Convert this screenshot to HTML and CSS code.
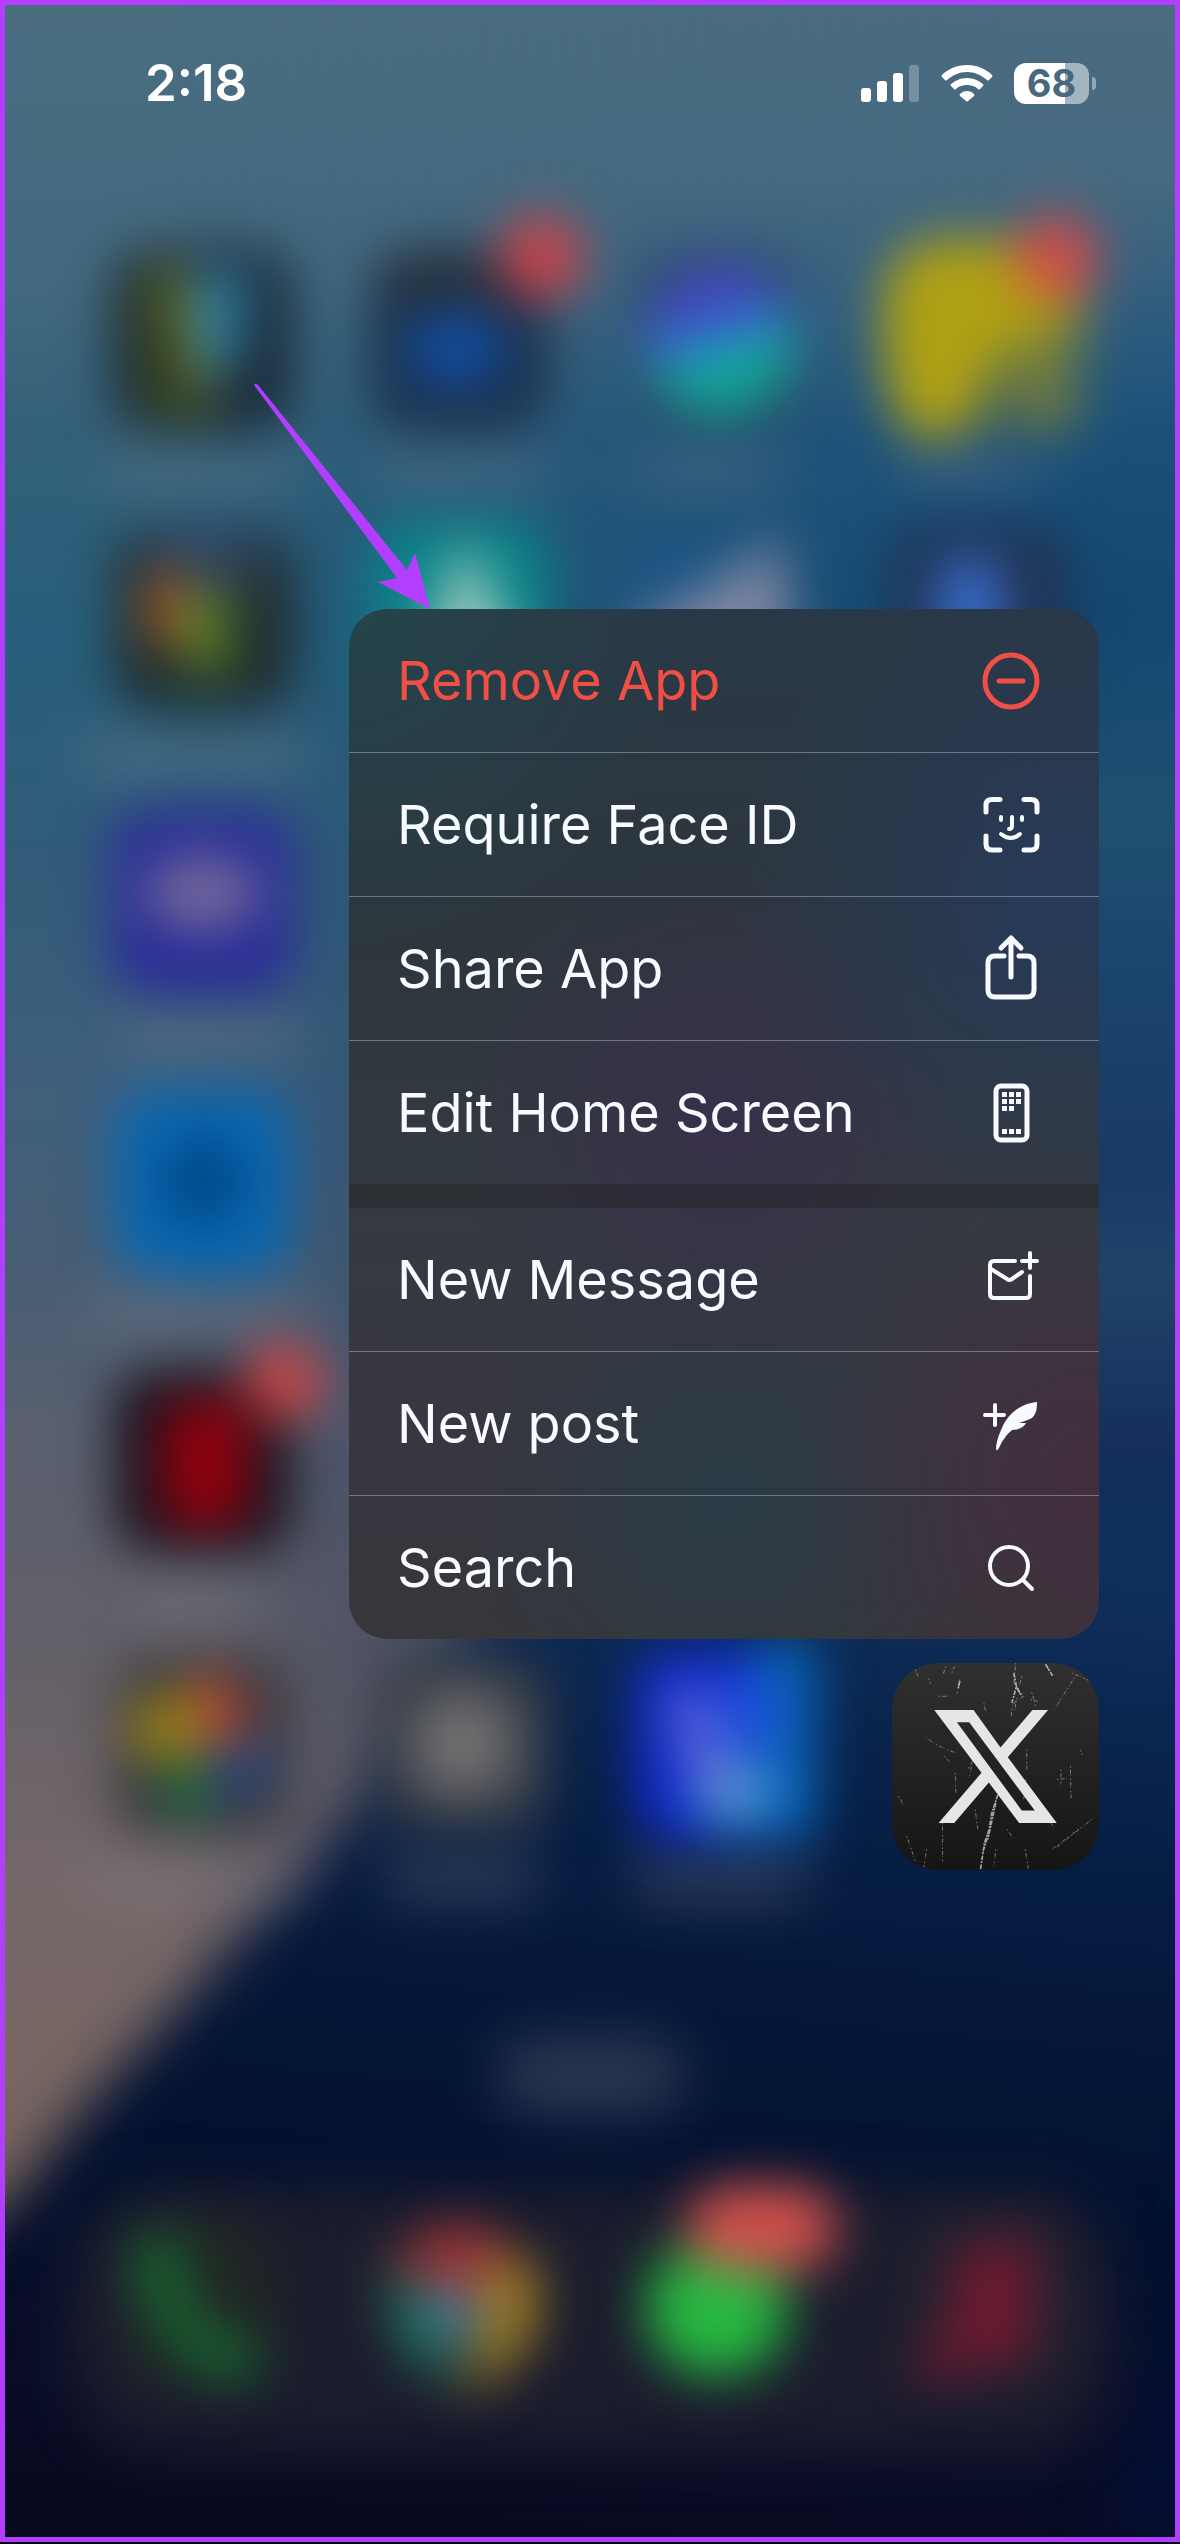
FILE: index.html
```html
<!DOCTYPE html>
<html lang="en">
<head>
    <meta charset="UTF-8">
    <meta name="viewport" content="width=device-width, initial-scale=1.0">
    <title>Home Screen</title>
    <link rel="stylesheet" href="styles.css">
</head>
<body>
    <div class="screen">
        <!-- blurred home screen -->
        <svg class="wallpaper" viewBox="5 5 1169 2531" preserveAspectRatio="xMidYMin slice" aria-hidden="true">
            <defs>
                <linearGradient id="left" gradientUnits="userSpaceOnUse" x1="0" y1="0" x2="0" y2="2544">
                    <stop offset="0" stop-color="#4a6d80"/>
                    <stop offset=".11" stop-color="#43697f"/>
                    <stop offset=".17" stop-color="#336079"/>
                    <stop offset=".25" stop-color="#285f7c"/>
                    <stop offset=".34" stop-color="#325c79"/>
                    <stop offset=".43" stop-color="#3f5f7b"/>
                    <stop offset=".5" stop-color="#485d73"/>
                    <stop offset=".56" stop-color="#596070"/>
                    <stop offset=".64" stop-color="#636069"/>
                    <stop offset=".74" stop-color="#746769"/>
                    <stop offset=".85" stop-color="#79655f"/>
                </linearGradient>
                <linearGradient id="right" gradientUnits="userSpaceOnUse" x1="0" y1="0" x2="0" y2="2544">
                    <stop offset="0" stop-color="#4a6b80"/>
                    <stop offset=".07" stop-color="#466a80"/>
                    <stop offset=".11" stop-color="#35607f"/>
                    <stop offset=".17" stop-color="#1b507b"/>
                    <stop offset=".24" stop-color="#134873"/>
                    <stop offset=".32" stop-color="#205070"/>
                    <stop offset=".38" stop-color="#1b456d"/>
                    <stop offset=".46" stop-color="#183a66"/>
                    <stop offset=".5" stop-color="#204369"/>
                    <stop offset=".57" stop-color="#162e5b"/>
                    <stop offset=".68" stop-color="#0b2855"/>
                    <stop offset=".8" stop-color="#071a40"/>
                </linearGradient>
                <linearGradient id="night" gradientUnits="userSpaceOnUse" x1="300" y1="1500" x2="200" y2="2544">
                    <stop offset="0" stop-color="#0f2f5c"/>
                    <stop offset=".2" stop-color="#08224a"/>
                    <stop offset=".4" stop-color="#05183b"/>
                    <stop offset=".65" stop-color="#03102e"/>
                    <stop offset=".85" stop-color="#0a0d28"/>
                    <stop offset="1" stop-color="#07091d"/>
                </linearGradient>
                <linearGradient id="fade">
                    <stop offset=".2" stop-color="#000"/>
                    <stop offset=".8" stop-color="#fff"/>
                </linearGradient>
                <linearGradient id="siri" x1=".35" y1="0" x2=".65" y2="1">
                    <stop offset=".1" stop-color="#443fb4"/>
                    <stop offset=".42" stop-color="#3d5cd2"/>
                    <stop offset=".62" stop-color="#14aaa6"/>
                    <stop offset="1" stop-color="#0ca688"/>
                </linearGradient>
                <mask id="fadeMask"><rect x="-100" y="0" width="1380" height="2544" fill="url(#fade)"/></mask>
                <filter id="soft" filterUnits="userSpaceOnUse" x="-100" y="-100" width="1380" height="2744" color-interpolation-filters="sRGB"><feGaussianBlur stdDeviation="25"/></filter>
                <filter id="softer" filterUnits="userSpaceOnUse" x="-200" y="-100" width="1580" height="2944" color-interpolation-filters="sRGB"><feGaussianBlur stdDeviation="28"/></filter>
            </defs>

            <rect width="1180" height="2544" fill="url(#left)"/>
            <rect width="1180" height="2544" fill="url(#right)" mask="url(#fadeMask)"/>
            <path d="M560 1480L455 1660L370 1795L280 1895L85 2105L5 2205L-160 2300V2760H1380V1480Z" fill="url(#night)" filter="url(#softer)"/>
            <path d="M1260 2020L1100 2544H1260Z" fill="#03103a" opacity=".7" filter="url(#softer)"/>

            <!-- label smudges and dock -->
            <g fill="#8a8c96" opacity=".3" filter="url(#softer)">
                <rect x="100" y="450" width="200" height="40" rx="20"/>
                <rect x="370" y="450" width="180" height="40" rx="20"/>
                <rect x="635" y="450" width="150" height="40" rx="20"/>
                <rect x="900" y="450" width="140" height="40" rx="20"/>
                <rect x="80" y="730" width="230" height="46" rx="20"/>
                <rect x="120" y="1010" width="180" height="46" rx="20"/>
                <rect x="90" y="1285" width="220" height="46" rx="20"/>
                <rect x="140" y="1575" width="120" height="46" rx="20"/>
                <rect x="80" y="1855" width="230" height="40" rx="20"/>
                <rect x="380" y="1850" width="160" height="50" rx="20"/>
                <rect x="630" y="1850" width="180" height="50" rx="20"/>
                <rect x="495" y="2036" width="190" height="76" rx="36"/>
            </g>
            <rect x="72" y="2185" width="1040" height="262" rx="90" fill="#1f1f2f" opacity=".9" filter="url(#softer)"/>

            <g filter="url(#soft)">
                <!-- row 1 -->
                <rect x="112" y="248" width="180" height="182" rx="40" fill="#1a2937"/>
                <path d="M128 280L168 260L215 425H140Z" fill="#2f3a20"/>
                <path d="M150 265H188L218 400H185Z" fill="#757f28" opacity=".7"/>
                <path d="M190 275L250 270L236 370L205 380Z" fill="#3080a8"/>
                <rect x="372" y="250" width="174" height="178" rx="40" fill="#1a2d46"/>
                <rect x="376" y="250" width="120" height="60" rx="30" fill="#26303c"/>
                <rect x="408" y="312" width="96" height="74" rx="26" fill="#124c9e"/>
                <circle cx="541" cy="257" r="43" fill="#c8444a"/>
                <rect x="635" y="252" width="164" height="174" rx="40" fill="#2b4a62" opacity=".85"/>
                <circle cx="719" cy="338" r="75" fill="url(#siri)"/>
                <path d="M882 300Q887 237 950 238H1040Q1085 260 1080 320L1075 430H1030L1000 360L960 438H910Q877 400 882 300Z" fill="#b0a114"/>
                <path d="M1000 350L1020 345L1040 430L975 440Z" fill="#4a6557"/>
                <path d="M1035 330H1075V425H1045Z" fill="#5f7148"/>
                <circle cx="1056" cy="257" r="42" fill="#d44b47"/>
                <!-- row 2 -->
                <rect x="114" y="531" width="180" height="178" rx="40" fill="#202c2e"/>
                <rect x="150" y="530" width="110" height="60" rx="26" fill="#30415e"/>
                <path d="M142 580L182 560L188 645H148Z" fill="#985729"/>
                <path d="M182 600L230 583L227 670L190 676Z" fill="#5e8626"/>
                <rect x="370" y="520" width="178" height="190" rx="40" fill="#0a8488"/>
                <path d="M465 535L415 670H525Z" fill="#9ccabf"/>
                <rect x="630" y="540" width="160" height="120" rx="46" fill="#1c5585"/>
                <path d="M780 535L720 580L630 630V680H795Z" fill="#8087a1"/>
                <rect x="890" y="526" width="178" height="190" rx="40" fill="#203352"/>
                <rect x="936" y="555" width="66" height="130" rx="30" fill="#386ac8"/>
                <!-- rows 3 to 6 -->
                <rect x="110" y="810" width="184" height="184" rx="40" fill="#2a2d98"/>
                <ellipse cx="202" cy="892" rx="58" ry="38" fill="#72679a"/>
                <rect x="114" y="1089" width="178" height="186" rx="40" fill="#0968b2"/>
                <rect x="160" y="1135" width="86" height="90" rx="36" fill="#004a8a"/>
                <rect x="114" y="1368" width="178" height="184" rx="40" fill="#19121d"/>
                <rect x="162" y="1398" width="86" height="128" rx="26" fill="#90020e"/>
                <circle cx="284" cy="1380" r="40" fill="#c84646"/>
                <rect x="114" y="1655" width="176" height="178" rx="40" fill="#38383f"/>
                <path d="M200 1665Q254 1680 244 1740L200 1745Z" fill="#b84535"/>
                <path d="M132 1700L200 1685V1758H132Z" fill="#997f16"/>
                <path d="M155 1760H205V1820H175Z" fill="#1c6e3a"/>
                <path d="M210 1745H276L260 1795H215Z" fill="#274884"/>
                <rect x="380" y="1655" width="168" height="174" rx="40" fill="#3a3f47"/>
                <circle cx="462" cy="1742" r="52" fill="#706e70"/>
                <rect x="634" y="1646" width="174" height="194" rx="40" fill="#102ccc"/>
                <path d="M760 1640H815V1835H700L725 1790Z" fill="#0866bc"/>
                <path d="M665 1690L700 1690L750 1800L700 1800Z" fill="#6c6cd8"/>
                <rect x="710" y="1680" width="65" height="72" rx="20" fill="#204bdc"/>
                <rect x="694" y="1768" width="74" height="48" rx="18" fill="#6094d0"/>
                <!-- dock -->
                <rect x="124" y="2214" width="150" height="170" rx="46" fill="#202624"/>
                <path d="M132 2245Q155 2215 185 2245L192 2305L222 2330Q264 2335 262 2365Q230 2400 190 2362Q130 2310 132 2245Z" fill="#186230"/>
                <path d="M388 2262Q460 2180 527 2266L465 2310L440 2290Z" fill="#9c3536"/>
                <path d="M388 2260L440 2310L455 2388Q373 2350 388 2260Z" fill="#1e6c54"/>
                <path d="M490 2255H530Q565 2350 460 2392L480 2330Z" fill="#a08026"/>
                <circle cx="450" cy="2312" r="28" fill="#437ea0"/>
                <rect x="644" y="2222" width="150" height="160" rx="46" fill="#1b2d2e"/>
                <ellipse cx="716" cy="2306" rx="70" ry="67" fill="#27b841"/>
                <rect x="686" y="2184" width="150" height="84" rx="42" fill="#d0504c"/>
                <rect x="914" y="2220" width="150" height="160" rx="46" fill="#23232e"/>
                <path d="M955 2248L1034 2230V2345Q1000 2380 970 2360Q935 2396 912 2365Q920 2332 948 2330Z" fill="#6c1a30"/>
            </g>
        </svg>

        <header class="status-bar">
            <span class="time">2:18</span>
            <div class="indicators">
                <svg class="signal" viewBox="0 0 60 40" aria-hidden="true">
                    <rect x="1" y="25" width="10" height="14" rx="3"/>
                    <rect x="17" y="18" width="10" height="21" rx="3"/>
                    <rect x="33" y="10" width="10" height="29" rx="3"/>
                    <rect x="49" y="2" width="10" height="37" rx="3" opacity=".25"/>
                </svg>
                <svg class="wifi" viewBox="0 0 52 40" aria-hidden="true">
                    <path d="M26 2C36 2 45 6 51 12Q52 13 51 14L48 17Q47 18 46 17C40 12 34 9 26 9S12 12 6 17Q5 18 4 17L1 14Q0 13 1 12C7 6 16 2 26 2Z"/>
                    <path d="M26 15C33 15 38 18 42 21Q43 22 42 23L39 26Q38 27 37 26C34 23 30 22 26 22S18 23 15 26Q14 27 13 26L10 23Q9 22 10 21C14 18 19 15 26 15Z"/>
                    <path d="M26 28C29 28 31 29 33 31Q34 32 33 33L27 38Q26 39 25 38L19 33Q18 32 19 31C21 29 23 28 26 28Z"/>
                </svg>
                <div class="battery"><span class="battery-level">68</span></div>
            </div>
        </header>

        <main class="context">
            <div class="menu-wrap">
                <svg class="arrow" viewBox="0 0 180 229" aria-hidden="true">
                    <path d="M4 5Q5 3 8 5L157 190L165 173L180 229L128 202L147 198Z"/>
                </svg>
                <div class="menu">
                    <div class="menu-group">
                        <button class="menu-item remove" type="button">Remove App
                            <svg class="icon" viewBox="0 0 60 72"><circle cx="30" cy="36" r="26"/><path d="M18 36H42"/></svg>
                        </button>
                        <button class="menu-item" type="button">Require Face ID
                            <svg class="icon" viewBox="0 0 60 72"><path d="M5 23V16Q5 10.500 11 10.500H19M43 10.500H50Q56 10.500 56 16V23M5 47V55Q5 61 11 61H19M43 61H50Q56 61 56 55V47"/><path class="face" d="M20 28V31M41 28V31M31 28V37Q31 40 28 40M20 45Q30 53 39 45"/></svg>
                        </button>
                        <button class="menu-item" type="button">Share App
                            <svg class="icon" viewBox="0 0 60 72"><path d="M23 23H14Q7 23 7 30V57Q7 64 14 64H46Q53 64 53 57V30Q53 23 46 23H38M30 44V5M20 15L30 5L40 15"/></svg>
                        </button>
                        <button class="menu-item" type="button">Edit Home Screen
                            <svg class="icon" viewBox="0 0 60 72"><rect x="15" y="9" width="31" height="54" rx="5"/><path class="solid" d="M21 15h5v5h-5zM28 15h5v5h-5zM35 15h5v5h-5zM21 22h5v5h-5zM28 22h5v5h-5zM35 22h5v5h-5zM21 29h5v5h-5zM28 29h5v5h-5zM21 52h5v5h-5zM28 52h5v5h-5zM35 52h5v5h-5z"/></svg>
                        </button>
                    </div>
                    <div class="menu-group">
                        <button class="menu-item" type="button">New Message
                            <svg class="icon thin" viewBox="0 0 60 72"><path d="M34 17H13Q9 17 9 21V50Q9 54 13 54H45Q49 54 49 50V32M10 25L26 35Q28 37 31 35L41 28M41 17H56M49 9V24"/></svg>
                        </button>
                        <button class="menu-item" type="button">New post
                            <svg class="icon thin" viewBox="0 0 60 72"><path d="M4 27H23M14 17V37"/><path class="solid" d="M56 14C37 16 26 28 21 40C17 48 15 56 15 61Q16 64 18 60C21 53 26 46 31 42C38 42 43 39 45 35L38 35C43 33 48 32 51 30C55 26 56 22 56 14Z"/></svg>
                        </button>
                        <button class="menu-item" type="button">Search
                            <svg class="icon thin" viewBox="0 0 60 72"><circle cx="28" cy="34" r="19"/><path d="M42 48L51 57"/></svg>
                        </button>
                    </div>
                </div>
            </div>

            <a class="app" href="#" aria-label="X">
                <svg viewBox="0 0 622 622" aria-hidden="true">
                    <defs>
                        <linearGradient id="tile" x1="0" y1="0" x2="0" y2="1">
                            <stop offset="0" stop-color="#303030"/>
                            <stop offset="1" stop-color="#151515"/>
                        </linearGradient>
                    </defs>
                    <rect width="622" height="622" fill="url(#tile)"/>
                    <g class="scratches">
                        <path d="M372 0L366 60L384 90L362 130L358 160M366 60L396 100L372 116L370 140M390 40L380 80M420 88L432 130M416 110L440 116M460 4L484 40M548 44L488 140M540 30L590 52"/>
                        <path d="M204 50L196 92M162 10L154 32M110 46L116 62M70 20L78 40M140 100H172M276 120L282 150M102 222Q130 250 198 272M158 280L172 296M240 300L234 340M250 280L228 320"/>
                        <path d="M405 260V320M402 350L396 410M536 310L538 410M508 320V370M496 350L530 346M566 262L572 276M600 470L492 556M560 500L480 560M470 470L490 500M346 500L362 524"/>
                        <path d="M190 330L192 390M20 400L36 430M44 520L72 600M152 480V600M104 560L96 614M250 440L258 500M400 560L410 620M312 560L306 610M180 30L188 10"/>
                    </g>
                    <path class="scratch-main" d="M366 30L374 70L360 120M376 76L390 100M204 54L198 80M462 4L482 38M318 396L300 450L292 500L278 540L266 620M294 500L272 572M312 420L288 530"/>
                    <path class="x-mark" fill-rule="evenodd" d="M127 141H245L326 254L422 141H469L348 283L495 481H382L291 359L187 481H140L269 330ZM195 178L390 443H429L232 178Z"/>
                </svg>
            </a>
        </main>
    </div>
</body>
</html>
```
FILE: styles.css
```css
* {
    box-sizing: border-box;
}
body {
    margin: 0;
    background-color: #0a0014;
    font-family: Inter, "Liberation Sans", sans-serif;
    color: #fff;
}
.screen {
    position: relative;
    min-height: calc(100vh - 2px);
    margin-bottom: 2px;
    border: 5px solid #b23fff;
    overflow: hidden;
}
.wallpaper {
    position: absolute;
    inset: 0;
    width: 100%;
    height: 100%;
}

/* status bar */
.status-bar {
    position: relative;
    display: flex;
    justify-content: space-between;
    align-items: center;
    padding: 48px 86px 0 140px;
}
.time {
    font-size: 51px;
    line-height: 60px;
    font-weight: 600;
}
.indicators {
    display: flex;
    align-items: center;
    gap: 21px;
}
.indicators svg {
    height: 40px;
    fill: #fff;
}
.signal {
    width: 60px;
}
.wifi {
    width: 52px;
}
.battery {
    position: relative;
    width: 75px;
    height: 41px;
    border-radius: 12px;
    background: linear-gradient(to right, #fff 68%, #a4b5c0 68%);
    text-align: center;
}
.battery::after {
    content: "";
    position: absolute;
    left: 78px;
    top: 14px;
    width: 4px;
    height: 13px;
    border-radius: 0 4px 4px 0;
    background-color: #93a6b3;
}
.battery-level {
    font-size: 38px;
    line-height: 41px;
    font-weight: 700;
    color: #48697d;
}

/* context menu */
.context {
    position: relative;
    display: flex;
    flex-direction: column;
    align-items: flex-end;
    gap: 24px;
    padding: 496px 76px 100px;
}
.menu-wrap {
    position: relative;
    width: 750px;
    max-width: 100%;
}
.arrow {
    position: absolute;
    left: -99px;
    bottom: 100%;
    width: 180px;
    fill: #b23fff;
}
.menu {
    display: flex;
    flex-direction: column;
    gap: 24px;
    border-radius: 38px;
    overflow: hidden;
    background:
        radial-gradient(circle at 0 0, #25444a, transparent 340px),
        radial-gradient(circle at 95% 28%, #273a5a, transparent 330px),
        radial-gradient(circle at 50% 50%, #38304a, transparent 270px),
        radial-gradient(circle at 100% 85%, #432e3d, transparent 290px),
        radial-gradient(circle at 50% 86%, #2a3b45, transparent 270px),
        linear-gradient(#293846, #2d363d 30%, #343a40 60%, #393640 80%, #36363b);
}
.menu-group + .menu-group {
    box-shadow: 0 -24px rgba(25, 25, 25, 0.3);
}
.menu-item {
    display: flex;
    justify-content: space-between;
    align-items: center;
    width: 100%;
    height: 144px;
    padding: 0 58px 0 48px;
    border: none;
    border-bottom: 1px solid rgba(230, 235, 255, 0.35);
    background: none;
    font-family: inherit;
    font-size: 54px;
    line-height: 72px;
    color: #f7faff;
    text-align: left;
    cursor: pointer;
}
.menu-item:last-child {
    height: 143px;
    border-bottom: none;
}
.remove {
    color: #ef4f45;
}
.icon {
    width: 60px;
    height: 72px;
    fill: none;
    stroke: currentColor;
    stroke-width: 5;
    stroke-linecap: round;
    stroke-linejoin: round;
}
.face {
    stroke-width: 4;
}
.thin {
    stroke-width: 4;
}
.solid {
    fill: currentColor;
    stroke: none;
}

/* app icon */
.app {
    width: 207px;
    height: 207px;
    border-radius: 46px;
    overflow: hidden;
}
.app svg {
    display: block;
    width: 100%;
}
.scratches {
    fill: none;
    stroke: #fff;
    stroke-width: 3;
    stroke-dasharray: 5 6 12 4 2 8;
    opacity: 0.4;
}
.scratch-main {
    fill: none;
    stroke: #fff;
    stroke-width: 5;
    stroke-dasharray: 14 3 6 4;
    opacity: 0.6;
}
.x-mark {
    fill: #e6e6e6;
}
```
